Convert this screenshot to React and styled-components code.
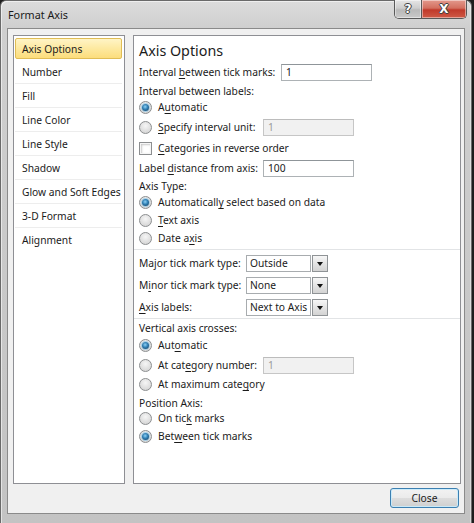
import React from 'react';
import styled, { createGlobalStyle } from 'styled-components';

const Global = createGlobalStyle`
  html, body { margin: 0; padding: 0; background: #1d1d1d; }
  body { font-family: "Noto Sans", "Open Sans", sans-serif; color: #1b1b1b; }
  #root { width: 474px; height: 523px; }
`;

const FS = 10.25;

const Window = styled.div`
  width: 472px;
  height: 523px;
  box-sizing: border-box;
  display: flex;
  flex-direction: column;
  padding: 0 6px 9px 6px;
  border: 1px solid #6a6a6a;
  border-bottom: none;
  border-radius: 6px 6px 0 0;
  background: linear-gradient(180deg, #dcdcdc 0, #cfcfcf 27px, #c3c3c3 100%);
  box-shadow: inset 1px 1px 0 rgba(255,255,255,0.55), inset -1px 0 0 rgba(255,255,255,0.35);
`;

const TitleBar = styled.div`
  height: 27px;
  display: flex;
  align-items: flex-start;
  margin-right: -2px;
`;

const Title = styled.div`
  font-size: 10.8px;
  line-height: 27px;
  padding-left: 1px;
  color: #1a1a1a;
`;

const Caption = styled.div`
  margin-left: auto;
  margin-top: -1px;
  display: flex;
  border: 1px solid #595959;
  border-top: none;
  border-radius: 0 0 5px 5px;
  overflow: hidden;
`;

const CapBtn = styled.div`
  width: ${p => p.$w}px;
  height: 18px;
  display: flex;
  align-items: center;
  justify-content: center;
  font-family: "DejaVu Sans", sans-serif;
  font-weight: bold;
  font-size: ${p => p.$fs}px;
  color: #fff;
  text-shadow: 0 0 1px #333, 1px 0 0 #444, -1px 0 0 #444, 0 1px 0 #444, 0 -1px 0 #444;
  background: ${p => p.$red
    ? 'linear-gradient(180deg, #e3998d 0, #d36f5f 45%, #c0392a 55%, #cf5a46 100%)'
    : 'linear-gradient(180deg, #e6e6e6 0, #cdcdcd 45%, #b9b9b9 55%, #c9c9c9 100%)'};
  box-shadow: inset 0 0 0 1px rgba(255,255,255,0.45);
  & + & { border-left: 1px solid #595959; }
`;

const Body = styled.div`
  flex: 1;
  display: flex;
  flex-direction: column;
  background: #f0f0f0;
  border: 1px solid #8a8a8a;
  padding: 6px 3px 0 5px;
  min-height: 0;
`;

const Panes = styled.div`
  flex: 1;
  display: flex;
  gap: 8px;
  min-height: 0;
`;

const Sidebar = styled.div`
  width: 112px;
  box-sizing: border-box;
  background: #fff;
  border: 1px solid #8e8f94;
  display: flex;
  flex-direction: column;
`;

const NavItem = styled.div`
  box-sizing: border-box;
  height: ${p => (p.$active ? 21 : 24)}px;
  margin: ${p => (p.$active ? '2px 2px 1px 1px' : '0 2px 0 1px')};
  padding-left: ${p => (p.$active ? 6 : 7)}px;
  display: flex;
  align-items: center;
  font-size: ${FS}px;
  white-space: nowrap;
  color: #1b1b1b;
  border-bottom: 1px solid ${p => (p.$active ? '#e0bd55' : '#ededed')};
  ${p => p.$active && `
    border: 1px solid #e0bd55;
    border-radius: 2px;
    background: linear-gradient(180deg, #fff4c6 0, #fde9a0 50%, #fcdd7c 100%);
  `}
  &:last-child { border-bottom: none; }
`;

const Panel = styled.div`
  flex: 1;
  background: #fff;
  border: 1px solid #8e8f94;
  padding: 3px 6px 0 5px;
  display: flex;
  flex-direction: column;
`;

const Heading = styled.div`
  height: 24px;
  line-height: 24px;
  font-size: 14.3px;
  color: #1b1b1b;
`;

const Row = styled.div`
  height: 16px;
  display: flex;
  align-items: center;
  margin-top: ${p => p.$mt || 0}px;
  font-size: ${FS}px;
  white-space: nowrap;
`;

const Label = styled.span`
  display: inline-block;
  width: ${p => (p.$w ? `${p.$w}px` : 'auto')};
  flex: none;
`;

const Key = styled.span`
  text-decoration: underline;
  text-underline-offset: 2px;
`;

const Input = styled.div`
  box-sizing: border-box;
  width: 91px;
  height: 17px;
  flex: none;
  display: flex;
  align-items: center;
  padding-left: 4px;
  font-size: ${FS}px;
  border: 1px solid ${p => (p.$disabled ? '#c6c6c6' : '#adb2b5')};
  border-top-color: ${p => (p.$disabled ? '#bcbcbc' : '#8f9599')};
  background: ${p => (p.$disabled ? '#f1f1f1' : '#fff')};
  color: ${p => (p.$disabled ? '#9a9a9a' : '#1b1b1b')};
`;

const Select = styled.div`
  display: flex;
  gap: 1px;
  height: 17px;
  flex: none;
`;

const SelectField = styled.div`
  box-sizing: border-box;
  width: 65px;
  height: 17px;
  border: 1px solid #a8acaf;
  padding-left: 3px;
  display: flex;
  align-items: center;
  font-size: ${FS}px;
  background: #fff;
`;

const DropBtn = styled.div`
  box-sizing: border-box;
  width: 16px;
  height: 17px;
  border: 1px solid #8f9396;
  background: linear-gradient(180deg, #f7f7f7 0, #e4e4e4 50%, #d3d3d3 100%);
  display: flex;
  align-items: center;
  justify-content: center;
  &::after {
    content: '';
    border-left: 3.5px solid transparent;
    border-right: 3.5px solid transparent;
    border-top: 4px solid #111;
    margin-top: 1px;
  }
`;

const RadioBox = styled.span`
  box-sizing: border-box;
  width: 13px;
  height: 13px;
  flex: none;
  margin: 0 6px 0 0;
  border-radius: 50%;
  border: 1px solid #8c8e90;
  background: radial-gradient(circle at 50% 35%, #f6f6f6 0, #dedede 60%, #cfcfcf 100%);
  display: flex;
  align-items: center;
  justify-content: center;
  &::after {
    content: '';
    display: ${p => (p.$on ? 'block' : 'none')};
    width: 7px;
    height: 7px;
    border-radius: 50%;
    background: radial-gradient(circle at 45% 40%, #8ed1f5 0, #2f7fb4 45%, #0c3250 100%);
    box-shadow: 0 0 0 1px rgba(120, 190, 230, 0.55);
  }
`;

const CheckBox = styled.span`
  box-sizing: border-box;
  width: 13px;
  height: 13px;
  flex: none;
  margin: 0 6px 0 0;
  border: 1px solid #8c8e90;
  background: #fff;
  box-shadow: inset 0 0 0 1px #f5f5f5, inset 1px 1px 2px 1px #c9c9c9;
`;

const Divider = styled.div`
  height: 1px;
  background: #e2e4e6;
  margin: ${p => p.$mt}px -6px ${p => p.$mb}px -5px;
`;

const Footer = styled.div`
  height: 29px;
  box-sizing: border-box;
  display: flex;
  justify-content: flex-end;
  align-items: flex-start;
  padding: 4px 2px 0 0;
`;

const Button = styled.div`
  box-sizing: border-box;
  width: 69px;
  height: 20px;
  border: 1px solid #3c7fb1;
  border-radius: 3px;
  display: flex;
  align-items: center;
  justify-content: center;
  font-size: ${FS}px;
  color: #1b1b1b;
  background: linear-gradient(180deg, #f2f2f2 0, #ebebeb 48%, #dddddd 52%, #cfcfcf 100%);
  box-shadow: inset 0 0 0 1px rgba(200, 235, 252, 0.9);
`;

const navItems = [
  'Axis Options', 'Number', 'Fill', 'Line Color', 'Line Style',
  'Shadow', 'Glow and Soft Edges', '3-D Format', 'Alignment',
];

const Radio = ({ on, mt, children, after }) => (
  <Row $mt={mt}>
    <RadioBox $on={on} />
    {children}
    {after}
  </Row>
);

export default function App() {
  return (
    <>
      <Global />
      <Window>
        <TitleBar>
          <Title>Format Axis</Title>
          <Caption>
            <CapBtn $w={26} $fs={12}>?</CapBtn>
            <CapBtn $w={44} $fs={12} $red>X</CapBtn>
          </Caption>
        </TitleBar>
        <Body>
          <Panes>
            <Sidebar>
              {navItems.map((n, i) => (
                <NavItem key={n} $active={i === 0}>{n}</NavItem>
              ))}
            </Sidebar>
            <Panel>
              <Heading>Axis Options</Heading>
              <Row $mt={1}>
                <Label $w={142}>Interval <Key>b</Key>etween tick marks:</Label>
                <Input>1</Input>
              </Row>
              <Row $mt={3}><Label>Interval between labels:</Label></Row>
              <Radio on mt={0}><Label>A<Key>u</Key>tomatic</Label></Radio>
              <Radio mt={4} after={<Input $disabled>1</Input>}>
                <Label $w={105}><Key>S</Key>pecify interval unit:</Label>
              </Radio>
              <Row $mt={5}>
                <CheckBox />
                <Label><Key>C</Key>ategories in reverse order</Label>
              </Row>
              <Row $mt={4}>
                <Label $w={124}>Label <Key>d</Key>istance from axis:</Label>
                <Input>100</Input>
              </Row>
              <Row $mt={2}><Label>Axis Type:</Label></Row>
              <Radio on mt={0}><Label>Automaticall<Key>y</Key> select based on data</Label></Radio>
              <Radio mt={2}><Label><Key>T</Key>ext axis</Label></Radio>
              <Radio mt={2}><Label>Date a<Key>x</Key>is</Label></Radio>
              <Divider $mt={3} $mb={5} />
              <Row>
                <Label $w={107}>Major tick mark type:</Label>
                <Select><SelectField>Outside</SelectField><DropBtn /></Select>
              </Row>
              <Row $mt={6}>
                <Label $w={107}>M<Key>i</Key>nor tick mark type:</Label>
                <Select><SelectField>None</SelectField><DropBtn /></Select>
              </Row>
              <Row $mt={6}>
                <Label $w={107}><Key>A</Key>xis labels:</Label>
                <Select><SelectField>Next to Axis</SelectField><DropBtn /></Select>
              </Row>
              <Divider $mt={3} $mb={1} />
              <Row><Label>Vertical axis crosses:</Label></Row>
              <Radio on mt={1}><Label>Aut<Key>o</Key>matic</Label></Radio>
              <Radio mt={4} after={<Input $disabled>1</Input>}>
                <Label $w={105}>At cat<Key>e</Key>gory number:</Label>
              </Radio>
              <Radio mt={3}><Label>At maximum cate<Key>g</Key>ory</Label></Radio>
              <Row $mt={3}><Label>Position Axis:</Label></Row>
              <Radio mt={-1}><Label>On tic<Key>k</Key> marks</Label></Radio>
              <Radio on mt={2}><Label>Bet<Key>w</Key>een tick marks</Label></Radio>
            </Panel>
          </Panes>
          <Footer>
            <Button>Close</Button>
          </Footer>
        </Body>
      </Window>
    </>
  );
}
